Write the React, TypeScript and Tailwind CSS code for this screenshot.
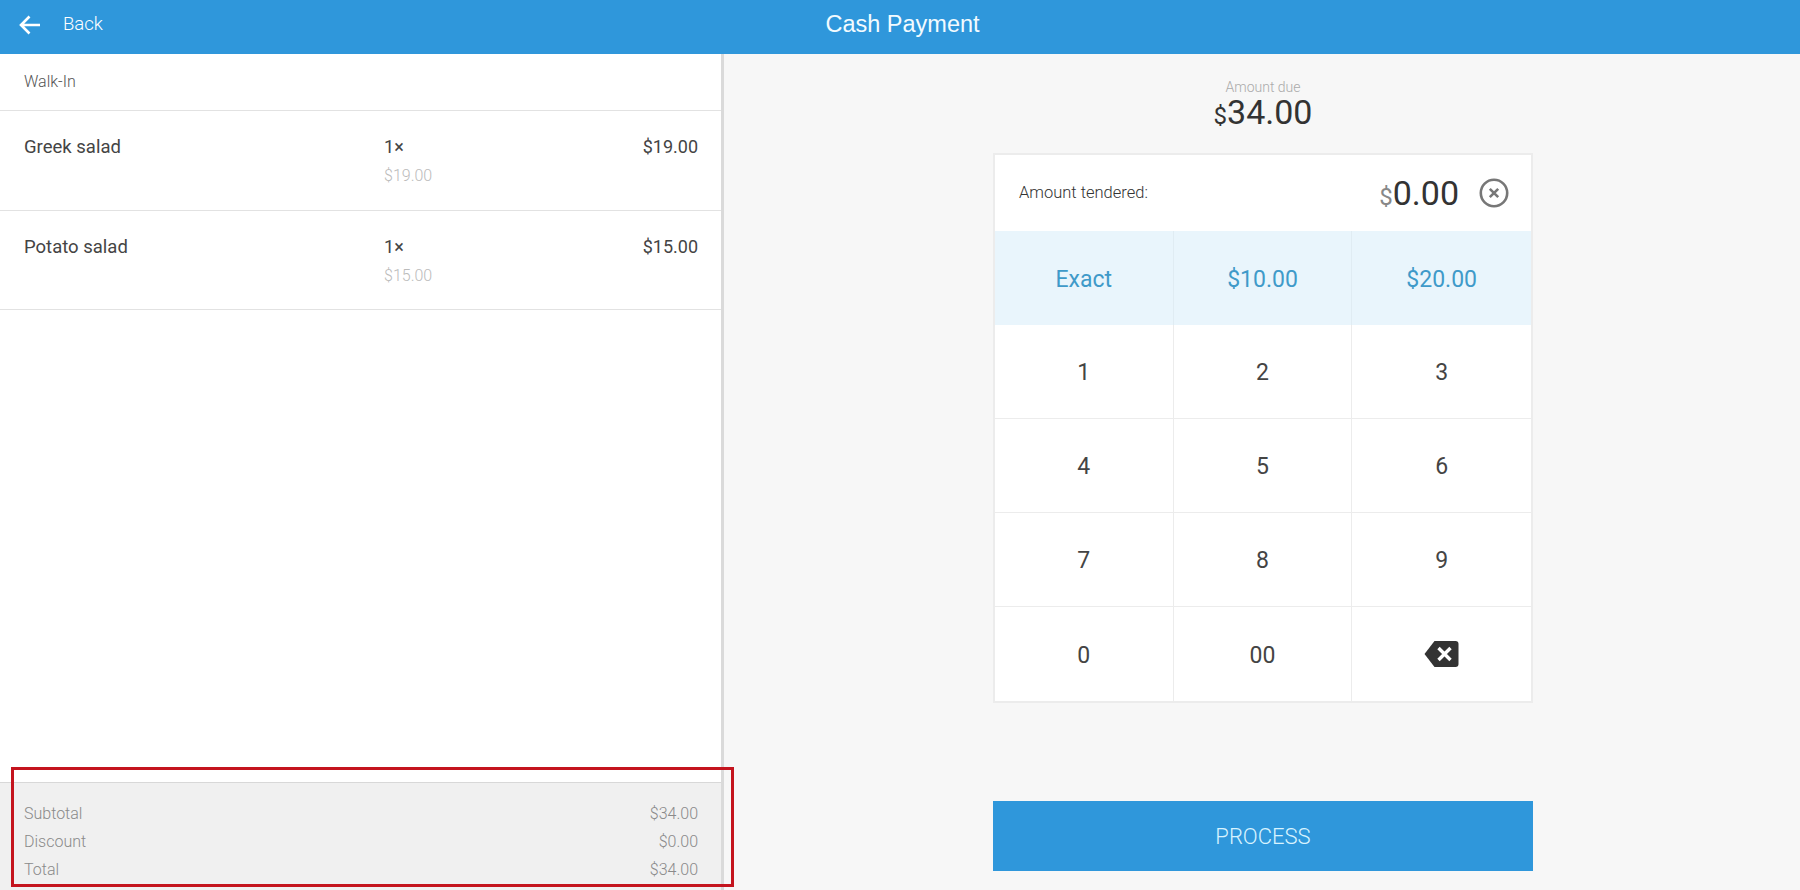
const items = [
  { name: "Greek salad", qty: "1", price: "$19.00" },
  { name: "Potato salad", qty: "1", price: "$15.00" },
];

const totals = [
  { label: "Subtotal", value: "$34.00" },
  { label: "Discount", value: "$0.00" },
  { label: "Total", value: "$34.00" },
];

const quick = ["Exact", "$10.00", "$20.00"];
const keys = ["1", "2", "3", "4", "5", "6", "7", "8", "9"];

function BackspaceIcon() {
  return (
    <svg width="37" height="28" viewBox="0 0 36 28">
      <path d="M11 1H32a3 3 0 0 1 3 3V24a3 3 0 0 1-3 3H11L1 14Z" fill="#333" />
      <path d="M15 8L27 20M27 8L15 20" stroke="#fff" strokeWidth="3.4" fill="none" />
    </svg>
  );
}

function ClearIcon() {
  return (
    <svg width="30" height="30" viewBox="0 0 30 30">
      <circle cx="15" cy="15" r="13.2" stroke="#777" strokeWidth="2.6" fill="none" />
      <path d="M10.8 10.8L19.2 19.2M19.2 10.8L10.8 19.2" stroke="#777" strokeWidth="2.6" fill="none" />
    </svg>
  );
}

export default function App() {
  return (
    <div className="relative flex h-[890px] w-[1800px] flex-col overflow-hidden bg-[#f7f7f7] [font-family:Roboto,sans-serif] text-[#333]">
      {/* Barra de topo */}
      <header className="relative flex h-[54px] shrink-0 items-center justify-center bg-[#2f97db] pb-[4px] text-white">
        <div className="absolute left-[19px] top-0 flex h-full items-center pb-[4px]">
          <svg width="22" height="20" viewBox="0 0 22 20">
            <path d="M10.5 1.5L2 10l8.5 8.5M2.5 10H21" stroke="#fff" strokeWidth="2.6" fill="none" />
          </svg>
          <span className="ml-[22px] text-[18.5px] font-light">Back</span>
        </div>
        <h1 className="ml-[5px] text-[23.5px] font-normal text-[#f2fbff] [font-family:'Liberation_Sans',Arial,sans-serif]">
          Cash Payment
        </h1>
      </header>

      <div className="flex flex-1">
        {/* Pedido */}
        <aside className="flex w-[724px] flex-col border-r-[3px] border-[#dadada] bg-white">
          <div className="flex h-[57px] items-center border-b border-[#e2e2e2] px-6 pb-px text-[16px] font-light text-[#555]">
            Walk-In
          </div>
          {items.map((item) => (
            <div key={item.name} className="flex h-[99.5px] border-b border-[#e2e2e2] pl-6 pr-[23px] pt-[24px] text-[#444]">
              <div className="w-[360px] text-[18.5px] leading-[24px]">{item.name}</div>
              <div className="flex-1">
                <div className="text-[18px] leading-[24px]">{item.qty}×</div>
                <div className="mt-[5px] text-[16px] font-light leading-[24px] text-[#bbb]">{item.price}</div>
              </div>
              <div className="text-[18px] leading-[24px]">{item.price}</div>
            </div>
          ))}
          <div className="flex-1" />
          <div className="flex h-[108px] flex-col border-t border-[#d8d8d8] bg-[#f0f0f0] pl-6 pr-[23px] pt-[17px] text-[16px] font-light text-[#8a8a8a]">
            {totals.map((row) => (
              <div key={row.label} className="flex h-[28px] items-center justify-between">
                <span>{row.label}</span>
                <span>{row.value}</span>
              </div>
            ))}
          </div>
        </aside>

        {/* Pagamento */}
        <main className="flex flex-1 flex-col items-center pl-[2px]">
          <div className="mt-[25px] text-[14px] font-light leading-[16px] text-[#aaa]">Amount due</div>
          <div className="-mt-px flex items-baseline leading-[36px]">
            <span className="text-[24px]">$</span>
            <span className="text-[34px]">34.00</span>
          </div>
          <div className="mt-[19px] w-[540px] border-2 border-[#ececec] bg-white">
            <div className="flex h-[76px] items-center pl-6 pr-[22px]">
              <span className="flex-1 text-[16.5px] font-light text-[#333]">Amount tendered:</span>
              <div className="flex items-baseline">
                <span className="text-[24px] text-[#888]">$</span>
                <span className="text-[34px]">0.00</span>
              </div>
              <div className="ml-[20px] flex">
                <ClearIcon />
              </div>
            </div>
            <div className="grid h-[94px] grid-cols-3 bg-[#e9f5fc] text-[23px] text-[#3f9ac9]">
              {quick.map((label, i) => (
                <div
                  key={label}
                  className={
                    i < 2
                      ? "flex items-center justify-center border-r border-[#e0ecf3] pt-[4px]"
                      : "flex items-center justify-center pt-[4px]"
                  }
                >
                  {label}
                </div>
              ))}
            </div>
            <div className="grid grid-cols-3 text-[23px] text-[#444]">
              {keys.map((key, i) => (
                <div
                  key={key}
                  className={
                    i % 3 === 2
                      ? "flex h-[94px] items-center justify-center border-b border-[#ececec] pt-[4px]"
                      : "flex h-[94px] items-center justify-center border-r border-b border-[#ececec] pt-[4px]"
                  }
                >
                  {key}
                </div>
              ))}
              <div className="flex h-[94px] items-center justify-center border-r border-[#ececec] pt-[4px]">0</div>
              <div className="flex h-[94px] items-center justify-center border-r border-[#ececec] pt-[4px]">00</div>
              <div className="flex h-[94px] items-center justify-center">
                <BackspaceIcon />
              </div>
            </div>
          </div>
          <button className="mt-[98px] flex h-[70px] w-[540px] items-center justify-center bg-[#2f97db] text-[22px] font-light text-[#d8f3ff]">
            PROCESS
          </button>
        </main>
      </div>

      {/* Marca vermelha da captura */}
      <div className="absolute left-[11px] top-[767px] h-[120px] w-[723px] border-[3px] border-[#c4141e]" />
    </div>
  );
}
